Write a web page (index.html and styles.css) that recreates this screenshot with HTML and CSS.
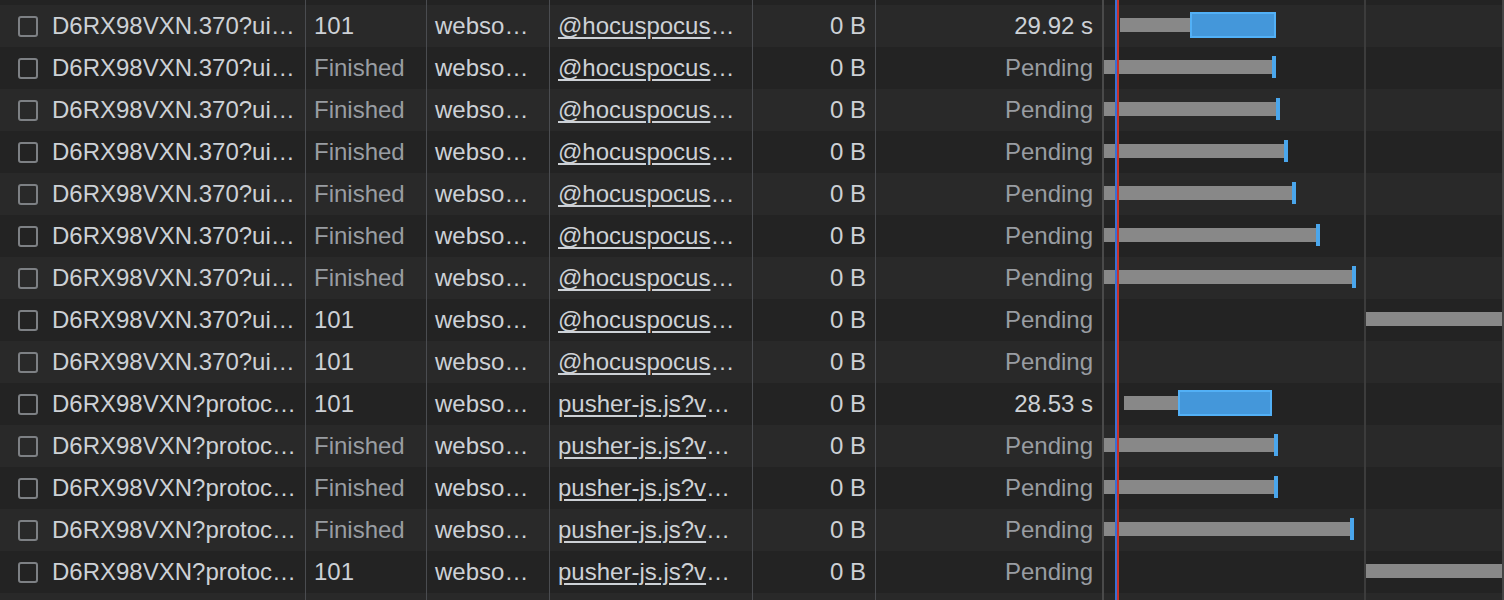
FILE: index.html
```html
<!DOCTYPE html>
<html lang="en">
<head>
<meta charset="utf-8">
<title>Network</title>
<link rel="stylesheet" href="styles.css">
</head>
<body>
<div class="table">
  <div class="row row-dark row-top">
    <div class="cell"></div><div class="cell"></div><div class="cell"></div><div class="cell"></div><div class="cell"></div><div class="cell"></div><div class="cell wf"></div>
  </div>

  <div class="row row-light">
    <div class="cell name"><span class="cb"></span><span class="txt">D6RX98VXN.370?ui…</span></div>
    <div class="cell">101</div>
    <div class="cell">webso…</div>
    <div class="cell init"><span class="link">@hocuspocus</span>…</div>
    <div class="cell num">0 B</div>
    <div class="cell num">29.92 s</div>
    <div class="cell wf"><span class="bar wait" style="left:16px;width:70px"></span><span class="bar box" style="left:86px;width:86px"></span></div>
  </div>

  <div class="row row-dark">
    <div class="cell name"><span class="cb"></span><span class="txt">D6RX98VXN.370?ui…</span></div>
    <div class="cell dim">Finished</div>
    <div class="cell">webso…</div>
    <div class="cell init"><span class="link">@hocuspocus</span>…</div>
    <div class="cell num">0 B</div>
    <div class="cell num dim">Pending</div>
    <div class="cell wf"><span class="bar wait" style="left:0;width:168px"></span><span class="bar tick" style="left:168px"></span></div>
  </div>

  <div class="row row-light">
    <div class="cell name"><span class="cb"></span><span class="txt">D6RX98VXN.370?ui…</span></div>
    <div class="cell dim">Finished</div>
    <div class="cell">webso…</div>
    <div class="cell init"><span class="link">@hocuspocus</span>…</div>
    <div class="cell num">0 B</div>
    <div class="cell num dim">Pending</div>
    <div class="cell wf"><span class="bar wait" style="left:0;width:172px"></span><span class="bar tick" style="left:172px"></span></div>
  </div>

  <div class="row row-dark">
    <div class="cell name"><span class="cb"></span><span class="txt">D6RX98VXN.370?ui…</span></div>
    <div class="cell dim">Finished</div>
    <div class="cell">webso…</div>
    <div class="cell init"><span class="link">@hocuspocus</span>…</div>
    <div class="cell num">0 B</div>
    <div class="cell num dim">Pending</div>
    <div class="cell wf"><span class="bar wait" style="left:0;width:180px"></span><span class="bar tick" style="left:180px"></span></div>
  </div>

  <div class="row row-light">
    <div class="cell name"><span class="cb"></span><span class="txt">D6RX98VXN.370?ui…</span></div>
    <div class="cell dim">Finished</div>
    <div class="cell">webso…</div>
    <div class="cell init"><span class="link">@hocuspocus</span>…</div>
    <div class="cell num">0 B</div>
    <div class="cell num dim">Pending</div>
    <div class="cell wf"><span class="bar wait" style="left:0;width:188px"></span><span class="bar tick" style="left:188px"></span></div>
  </div>

  <div class="row row-dark">
    <div class="cell name"><span class="cb"></span><span class="txt">D6RX98VXN.370?ui…</span></div>
    <div class="cell dim">Finished</div>
    <div class="cell">webso…</div>
    <div class="cell init"><span class="link">@hocuspocus</span>…</div>
    <div class="cell num">0 B</div>
    <div class="cell num dim">Pending</div>
    <div class="cell wf"><span class="bar wait" style="left:0;width:212px"></span><span class="bar tick" style="left:212px"></span></div>
  </div>

  <div class="row row-light">
    <div class="cell name"><span class="cb"></span><span class="txt">D6RX98VXN.370?ui…</span></div>
    <div class="cell dim">Finished</div>
    <div class="cell">webso…</div>
    <div class="cell init"><span class="link">@hocuspocus</span>…</div>
    <div class="cell num">0 B</div>
    <div class="cell num dim">Pending</div>
    <div class="cell wf"><span class="bar wait" style="left:0;width:248px"></span><span class="bar tick" style="left:248px"></span></div>
  </div>

  <div class="row row-dark">
    <div class="cell name"><span class="cb"></span><span class="txt">D6RX98VXN.370?ui…</span></div>
    <div class="cell">101</div>
    <div class="cell">webso…</div>
    <div class="cell init"><span class="link">@hocuspocus</span>…</div>
    <div class="cell num">0 B</div>
    <div class="cell num dim">Pending</div>
    <div class="cell wf"><span class="bar wait" style="left:262px;width:136px"></span></div>
  </div>

  <div class="row row-light">
    <div class="cell name"><span class="cb"></span><span class="txt">D6RX98VXN.370?ui…</span></div>
    <div class="cell">101</div>
    <div class="cell">webso…</div>
    <div class="cell init"><span class="link">@hocuspocus</span>…</div>
    <div class="cell num">0 B</div>
    <div class="cell num dim">Pending</div>
    <div class="cell wf"></div>
  </div>

  <div class="row row-dark">
    <div class="cell name"><span class="cb"></span><span class="txt">D6RX98VXN?protoc…</span></div>
    <div class="cell">101</div>
    <div class="cell">webso…</div>
    <div class="cell init"><span class="link">pusher-js.js?v</span>…</div>
    <div class="cell num">0 B</div>
    <div class="cell num">28.53 s</div>
    <div class="cell wf"><span class="bar wait" style="left:20px;width:54px"></span><span class="bar box" style="left:74px;width:94px"></span></div>
  </div>

  <div class="row row-light">
    <div class="cell name"><span class="cb"></span><span class="txt">D6RX98VXN?protoc…</span></div>
    <div class="cell dim">Finished</div>
    <div class="cell">webso…</div>
    <div class="cell init"><span class="link">pusher-js.js?v</span>…</div>
    <div class="cell num">0 B</div>
    <div class="cell num dim">Pending</div>
    <div class="cell wf"><span class="bar wait" style="left:0;width:170px"></span><span class="bar tick" style="left:170px"></span></div>
  </div>

  <div class="row row-dark">
    <div class="cell name"><span class="cb"></span><span class="txt">D6RX98VXN?protoc…</span></div>
    <div class="cell dim">Finished</div>
    <div class="cell">webso…</div>
    <div class="cell init"><span class="link">pusher-js.js?v</span>…</div>
    <div class="cell num">0 B</div>
    <div class="cell num dim">Pending</div>
    <div class="cell wf"><span class="bar wait" style="left:0;width:170px"></span><span class="bar tick" style="left:170px"></span></div>
  </div>

  <div class="row row-light">
    <div class="cell name"><span class="cb"></span><span class="txt">D6RX98VXN?protoc…</span></div>
    <div class="cell dim">Finished</div>
    <div class="cell">webso…</div>
    <div class="cell init"><span class="link">pusher-js.js?v</span>…</div>
    <div class="cell num">0 B</div>
    <div class="cell num dim">Pending</div>
    <div class="cell wf"><span class="bar wait" style="left:0;width:246px"></span><span class="bar tick" style="left:246px"></span></div>
  </div>

  <div class="row row-dark">
    <div class="cell name"><span class="cb"></span><span class="txt">D6RX98VXN?protoc…</span></div>
    <div class="cell">101</div>
    <div class="cell">webso…</div>
    <div class="cell init"><span class="link">pusher-js.js?v</span>…</div>
    <div class="cell num">0 B</div>
    <div class="cell num dim">Pending</div>
    <div class="cell wf"><span class="bar wait" style="left:262px;width:136px"></span></div>
  </div>

  <div class="row row-light row-bottom">
    <div class="cell"></div><div class="cell"></div><div class="cell"></div><div class="cell"></div><div class="cell"></div><div class="cell"></div><div class="cell wf"></div>
  </div>
</div>
</body>
</html>
```

FILE: styles.css
```css
* {
  box-sizing: border-box;
}

html, body {
  margin: 0;
  padding: 0;
  background: #232323;
  overflow: hidden;
}

body {
  font-family: "Liberation Sans", Arial, sans-serif;
  font-size: 24px;
  color: #cdd1d6;
}

.table {
  width: 1504px;
  display: flex;
  flex-direction: column;
}

.row {
  display: grid;
  grid-template-columns: 306px 121px 123px 203px 123px 226px 402px;
  height: 42px;
}

.row-top {
  height: 5px;
}

.row-bottom {
  height: 7px;
}

.row-light {
  background: #292929;
}

.row-dark {
  background: #232323;
}

.cell {
  display: flex;
  align-items: center;
  padding: 0 8px;
  white-space: nowrap;
  overflow: hidden;
  line-height: 42px;
  border-right: 1px solid #4a4c50;
  padding-top: 0;
}

.cell:nth-child(6) {
  border-right: none;
}

.name {
  padding-left: 18px;
  gap: 14px;
}

.cb {
  flex: none;
  width: 20px;
  height: 21px;
  border: 2px solid #7d8084;
  border-radius: 3px;
}

.dim {
  color: #999da2;
}

.num {
  justify-content: flex-end;
  padding-right: 9px;
}

.link {
  text-decoration: underline;
  text-decoration-thickness: 2px;
  text-underline-offset: 3px;
}

.wf {
  position: relative;
  padding: 0;
  border-left: 2px solid #4a4a4a;
  border-right: 2px solid #454545;
  background-image: linear-gradient(to right, transparent 260px, #3c3c3c 260px, #3c3c3c 262px, transparent 262px);
}

.wf::after {
  content: "";
  position: absolute;
  top: 0;
  bottom: 0;
  left: 11px;
  width: 4px;
  background: linear-gradient(to right, #3a6fd3 50%, #c6302b 50%);
  z-index: 2;
}

.bar {
  position: absolute;
  display: block;
}

.wait {
  top: 13px;
  height: 14px;
  background: #888888;
}

.tick {
  top: 9px;
  height: 22px;
  width: 4px;
  background: #4aa6ec;
}

.box {
  top: 7px;
  height: 26px;
  background: #4497da;
  border: 2px solid #52b0f6;
}
```
